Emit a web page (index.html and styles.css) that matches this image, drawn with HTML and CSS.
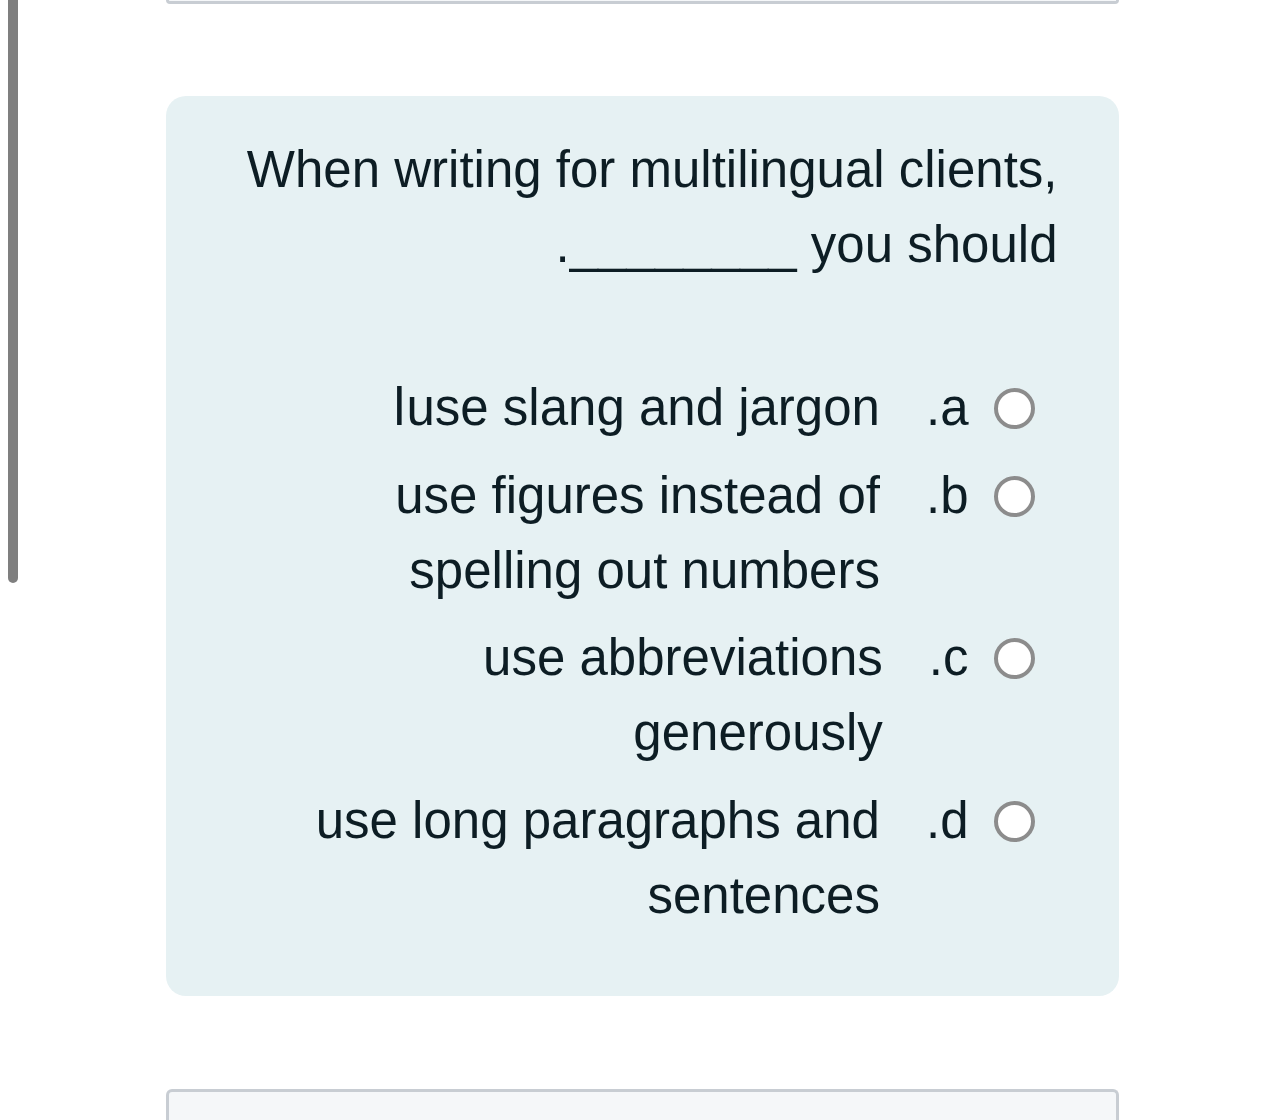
FILE: index.html
```html
<!DOCTYPE html>
<html lang="ar">
<head>
<meta charset="utf-8">
<title>Question</title>
<link rel="stylesheet" href="styles.css">
</head>
<body>
<div class="scrollbar"></div>
<main class="page">
  <div class="prev-box"></div>
  <section class="card" dir="rtl">
    <p class="question">When writing for multilingual clients, you should ________.</p>
    <div class="options">
      <label class="option">
        <span class="radio"></span>
        <span class="letter">a.</span>
        <span class="text">use slang and jargonا</span>
      </label>
      <label class="option">
        <span class="radio"></span>
        <span class="letter">b.</span>
        <span class="text">use figures instead of spelling out numbers</span>
      </label>
      <label class="option">
        <span class="radio"></span>
        <span class="letter">c.</span>
        <span class="text">use abbreviations generously</span>
      </label>
      <label class="option">
        <span class="radio"></span>
        <span class="letter">d.</span>
        <span class="text">use long paragraphs and sentences</span>
      </label>
    </div>
  </section>
  <div class="next-box"></div>
</main>
</body>
</html>
```
FILE: styles.css
```css
html, body {
  margin: 0;
  padding: 0;
  background: #ffffff;
  overflow: hidden;
}

body {
  font-family: "Liberation Sans", Arial, "DejaVu Sans", sans-serif;
  color: #0d1d24;
  height: 1120px;
}

.scrollbar {
  position: fixed;
  left: 8px;
  top: -10px;
  width: 10px;
  height: 593px;
  border-radius: 5px;
  background: #7f7f7f;
}

.page {
  width: 953px;
  margin: 0 auto;
  display: flex;
  flex-direction: column;
}

.prev-box {
  box-sizing: border-box;
  height: 4px;
  border: 3px solid #c8cdd3;
  border-top: 0;
  border-radius: 0 0 6px 6px;
  background: #f5f7f9;
  margin-bottom: 92px;
}

.card {
  box-sizing: border-box;
  height: 900px;
  background: #e6f1f3;
  border-radius: 20px;
  padding: 36px 0 63px;
}

.question {
  margin: 0;
  padding: 0 61px 0 53px;
  font-size: 51px;
  line-height: 75px;
  text-align: start;
}

.options {
  margin-top: 88px;
  padding: 0 84px;
  display: flex;
  flex-direction: column;
  gap: 12.5px;
}

.option {
  display: flex;
  flex-direction: row;
  align-items: flex-start;
  font-size: 51px;
  line-height: 75px;
}

.radio {
  flex: 0 0 auto;
  box-sizing: border-box;
  width: 41px;
  height: 41px;
  margin-top: 18px;
  border: 4px solid #8c8c8c;
  border-radius: 50%;
  background: #ffffff;
}

.letter {
  flex: 0 0 auto;
  margin-right: 25px;
}

.text {
  width: 590px;
  margin-right: 46px;
}

.next-box {
  box-sizing: border-box;
  flex: 0 0 auto;
  height: 31px;
  margin-top: 93px;
  border: 3px solid #c8cdd3;
  border-bottom: 0;
  border-radius: 6px 6px 0 0;
  background: #f5f7f9;
}
```
